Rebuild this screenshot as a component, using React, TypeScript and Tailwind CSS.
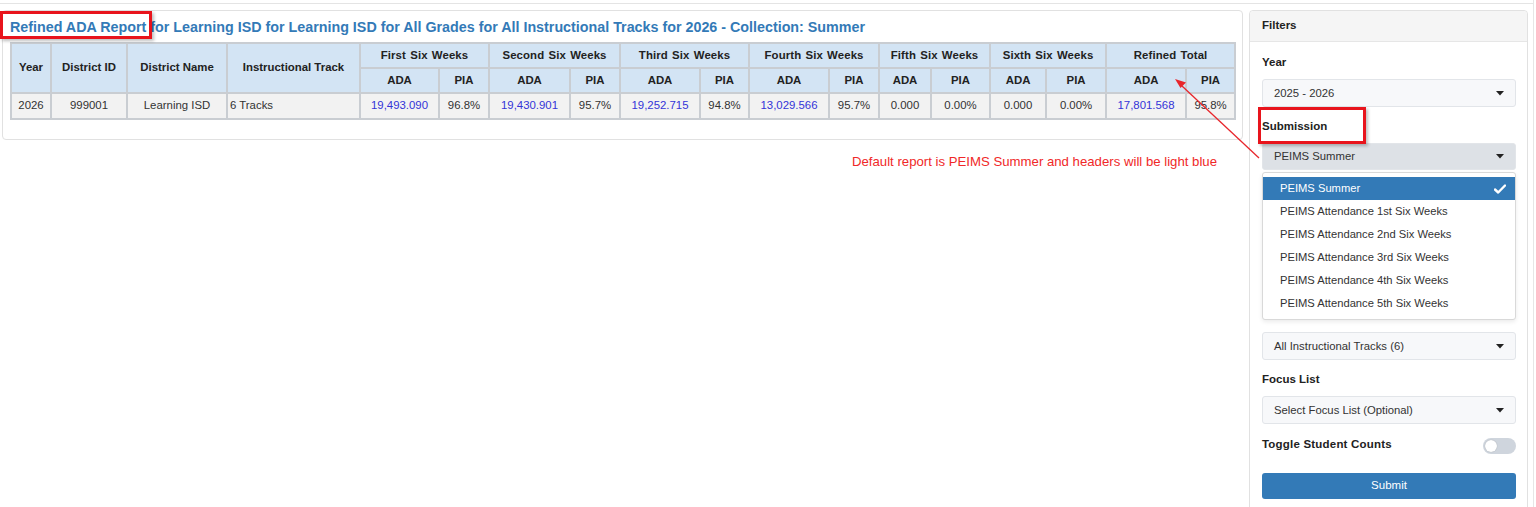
import React from 'react';

const font = { fontFamily: '"Liberation Sans", Arial, sans-serif' };

type Period = { name: string; ada: string; pia: string; link: boolean; w: [number, number] };

const periods: Period[] = [
  { name: 'First Six Weeks', ada: '19,493.090', pia: '96.8%', link: true, w: [79, 50] },
  { name: 'Second Six Weeks', ada: '19,430.901', pia: '95.7%', link: true, w: [81, 50] },
  { name: 'Third Six Weeks', ada: '19,252.715', pia: '94.8%', link: true, w: [80, 49] },
  { name: 'Fourth Six Weeks', ada: '13,029.566', pia: '95.7%', link: true, w: [80, 50] },
  { name: 'Fifth Six Weeks', ada: '0.000', pia: '0.00%', link: false, w: [52, 59] },
  { name: 'Sixth Six Weeks', ada: '0.000', pia: '0.00%', link: false, w: [56, 60] },
  { name: 'Refined Total', ada: '17,801.568', pia: '95.8%', link: true, w: [80, 49] },
];

const submissions = [
  'PEIMS Summer',
  'PEIMS Attendance 1st Six Weeks',
  'PEIMS Attendance 2nd Six Weeks',
  'PEIMS Attendance 3rd Six Weeks',
  'PEIMS Attendance 4th Six Weeks',
  'PEIMS Attendance 5th Six Weeks',
];

const th = 'border-2 border-[#c9cdd2] bg-[#d3e4f4] font-bold text-[#222] text-center';
const td = 'border-2 border-[#c9cdd2] bg-[#f2f2f2] text-[#333] text-center';

const Caret = () => (
  <svg width="8" height="5" viewBox="0 0 8 5" className="shrink-0">
    <path d="M0 0h8L4 4.5z" fill="#222" />
  </svg>
);

const Select = ({ value, active, h = 'h-[27px]' }: { value?: string; active?: boolean; h?: string }) => (
  <div
    className={`${h} flex items-center justify-between pl-[11px] pr-[11px] rounded-[3px] border border-[#e2e5e9] text-[11.3px] text-[#333] ${
      active ? 'bg-[#dde1e6]' : 'bg-[#f7f8fa]'
    }`}
  >
    <span>{value}</span>
    <Caret />
  </div>
);

const Label = ({ children }: { children?: React.ReactNode }) => (
  <div className="h-[16px] text-[11.5px] font-bold text-[#222] leading-[16px] mb-[9px]">{children}</div>
);

export default function App() {
  return (
    <div className="relative w-[1534px] min-h-[507px] bg-white border-r border-[#e6e6e6]" style={font}>
      <div className="h-[4px] border-b border-[#e4e4e4]" />
      <div className="flex items-start gap-[6px] pl-[2px] pt-[6px]">
        {/* Report */}
        <div className="w-[1241px] border border-[#e1e1e1] rounded-[4px] pl-[7px] pr-[7px] pb-[19px]">
          <h2 className="text-[14.3px] font-bold text-[#337ab7] leading-[20px] pt-[6px] pb-[5px]">
            Refined ADA Report for Learning ISD for Learning ISD for All Grades for All Instructional Tracks for 2026 - Collection: Summer
          </h2>
          <table className="table-fixed border-collapse w-[1224px] text-[11.4px]">
            <colgroup>
              <col style={{ width: 40 }} />
              <col style={{ width: 76 }} />
              <col style={{ width: 100 }} />
              <col style={{ width: 133 }} />
              {periods.flatMap((p) => [
                <col key={p.name + 'a'} style={{ width: p.w[0] }} />,
                <col key={p.name + 'p'} style={{ width: p.w[1] }} />,
              ])}
            </colgroup>
            <thead>
              <tr className="h-[25px]">
                <th rowSpan={2} className={th}>Year</th>
                <th rowSpan={2} className={th}>District ID</th>
                <th rowSpan={2} className={th}>District Name</th>
                <th rowSpan={2} className={th}>Instructional Track</th>
                {periods.map((p) => (
                  <th key={p.name} colSpan={2} className={`${th} tracking-[0.1px] [word-spacing:1px]`}>
                    {p.name}
                  </th>
                ))}
              </tr>
              <tr className="h-[25px]">
                {periods.flatMap((p) => [
                  <th key={p.name + 'a'} className={th}>ADA</th>,
                  <th key={p.name + 'p'} className={th}>PIA</th>,
                ])}
              </tr>
            </thead>
            <tbody>
              <tr className="h-[26px]">
                <td className={td}>2026</td>
                <td className={td}>999001</td>
                <td className={td}>Learning ISD</td>
                <td className={`${td} !text-left pl-[2px]`}>6 Tracks</td>
                {periods.flatMap((p) => [
                  <td key={p.name + 'a'} className={`${td} ${p.link ? '!text-[#3434d8]' : ''}`}>{p.ada}</td>,
                  <td key={p.name + 'p'} className={td}>{p.pia}</td>,
                ])}
              </tr>
            </tbody>
          </table>
        </div>

        {/* Filters */}
        <div className="w-[279px] min-h-[510px] border border-[#e1e1e1] rounded-[4px]">
          <div className="h-[31px] flex items-center px-[12px] bg-[#f5f5f5] border-b border-[#e6e6e6] rounded-t-[4px] text-[11.5px] font-bold text-[#222]">
            Filters
          </div>
          <div className="relative pl-[12px] pr-[11px] pt-[12px]">
            <Label>Year</Label>
            <Select value="2025 - 2026" h="h-[28px]" />
            <div className="mt-[11px]">
              <Label>Submission</Label>
              <Select value="PEIMS Summer" active />
            </div>
            {/* fields hidden behind the open menu */}
            <div className="mt-[11px]">
              <Label />
              <Select />
            </div>
            <div className="mt-[11px]">
              <Label />
              <Select />
            </div>
            <div className="mt-[11px]">
              <Label />
              <Select value="All Instructional Tracks (6)" h="h-[28px]" />
            </div>
            <div className="mt-[11px]">
              <Label>Focus List</Label>
              <Select value="Select Focus List (Optional)" h="h-[28px]" />
            </div>
            <div className="mt-[12px] flex items-start justify-between">
              <span className="text-[11.5px] font-bold text-[#222] leading-[16px] tracking-[0.2px]">Toggle Student Counts</span>
              <span className="mt-[2px] w-[33px] h-[16px] rounded-full bg-[#cfd5dd] p-[2px] flex">
                <span className="w-[12px] h-[12px] rounded-full bg-white shadow-[0_0_1px_rgba(0,0,0,0.3)]" />
              </span>
            </div>
            <button className="mt-[19px] w-full h-[26px] rounded-[3px] bg-[#337ab7] text-white text-[11.5px]">Submit</button>

            {/* open submission menu */}
            <div className="absolute left-[12px] right-[11px] top-[130px] bg-white border border-[#d9d9d9] rounded-[3px] shadow-[0_2px_4px_rgba(0,0,0,0.08)] py-[4px]">
              {submissions.map((s, i) => (
                <div
                  key={s}
                  className={`h-[23px] flex items-center justify-between pl-[17px] pr-[9px] text-[11.2px] ${
                    i === 0 ? 'bg-[#337ab7] text-white' : 'text-[#333]'
                  }`}
                >
                  <span>{s}</span>
                  {i === 0 && (
                    <svg width="12" height="10" viewBox="0 0 12 10">
                      <path d="M1 5.5l3.2 3L11 1.5" stroke="#fff" strokeWidth="2.4" fill="none" strokeLinecap="round" strokeLinejoin="round" />
                    </svg>
                  )}
                </div>
              ))}
            </div>
          </div>
        </div>
      </div>

      {/* annotations */}
      <div className="absolute left-0 top-[11px] w-[152px] h-[28px] border-[3px] border-[#e8141c] shadow-[2px_2px_3px_rgba(0,0,0,0.25)]" />
      <div className="absolute left-[1258px] top-[107px] w-[108px] h-[37px] border-[3px] border-[#e8141c] shadow-[2px_2px_3px_rgba(0,0,0,0.25)]" />
      <div className="absolute left-[852px] top-[153px] text-[13.2px] text-[#f02828] leading-[18px]">
        Default report is PEIMS Summer and headers will be light blue
      </div>
      <svg className="absolute left-0 top-0 pointer-events-none" width="1536" height="507">
        <line x1="1259" y1="158" x2="1182" y2="86" stroke="#e8262c" strokeWidth="1.3" />
        <path d="M1175 79l11 3.5-5.5 5.5z" fill="#e8262c" />
      </svg>
    </div>
  );
}
